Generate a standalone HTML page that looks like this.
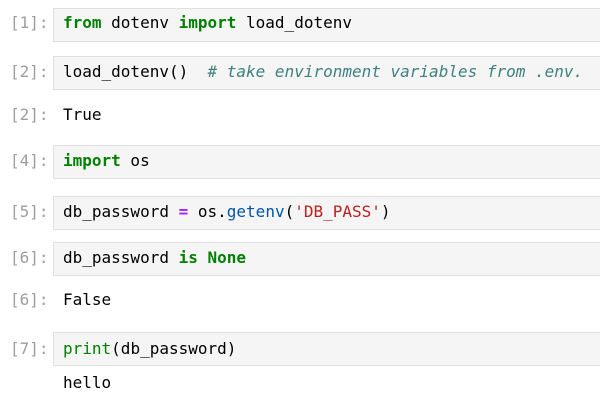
<!DOCTYPE html>
<html><head><style>
body{margin:0;width:600px;height:402px;background:#fff;position:relative;overflow:hidden;font-family:"DejaVu Sans Mono","Liberation Mono",monospace;font-size:16px;}
.p{position:absolute;left:10px;color:#9e9e9e;line-height:20px;}
.b{position:absolute;left:53px;width:560px;height:32px;background:#f5f5f5;border:1px solid #e0e0e0;}
.t{position:absolute;left:63px;line-height:20px;color:#000;white-space:pre;}
.k{color:#008000;font-weight:bold}
.c{color:#408080;font-style:italic}
.o{color:#aa22ff;font-weight:bold}
.s{color:#ba2121}
.f{color:#0055aa}
.g{color:#008000}
</style></head><body>
<div class="b" style="top:8px"></div><div class="p" style="top:13px">[1]:</div><div class="t" style="top:13px"><span class="k">from</span> dotenv <span class="k">import</span> load_dotenv</div>
<div class="b" style="top:56px"></div><div class="p" style="top:62px">[2]:</div><div class="t" style="top:62px">load_dotenv()  <span class="c"># take environment variables from .env.</span></div>
<div class="p" style="top:105px">[2]:</div><div class="t" style="top:105px">True</div>
<div class="b" style="top:145px"></div><div class="p" style="top:151px">[4]:</div><div class="t" style="top:151px"><span class="k">import</span> os</div>
<div class="b" style="top:196px"></div><div class="p" style="top:202px">[5]:</div><div class="t" style="top:202px">db_password <span class="o">=</span> os<span style="color:#000">.</span><span class="f">getenv</span>(<span class="s">'DB_PASS'</span>)</div>
<div class="b" style="top:242px"></div><div class="p" style="top:248px">[6]:</div><div class="t" style="top:248px">db_password <span class="k">is</span> <span class="k">None</span></div>
<div class="p" style="top:290px">[6]:</div><div class="t" style="top:290px">False</div>
<div class="b" style="top:332px"></div><div class="p" style="top:339px">[7]:</div><div class="t" style="top:339px"><span class="g">print</span>(db_password)</div>
<div class="t" style="top:373px">hello</div>
</body></html>
